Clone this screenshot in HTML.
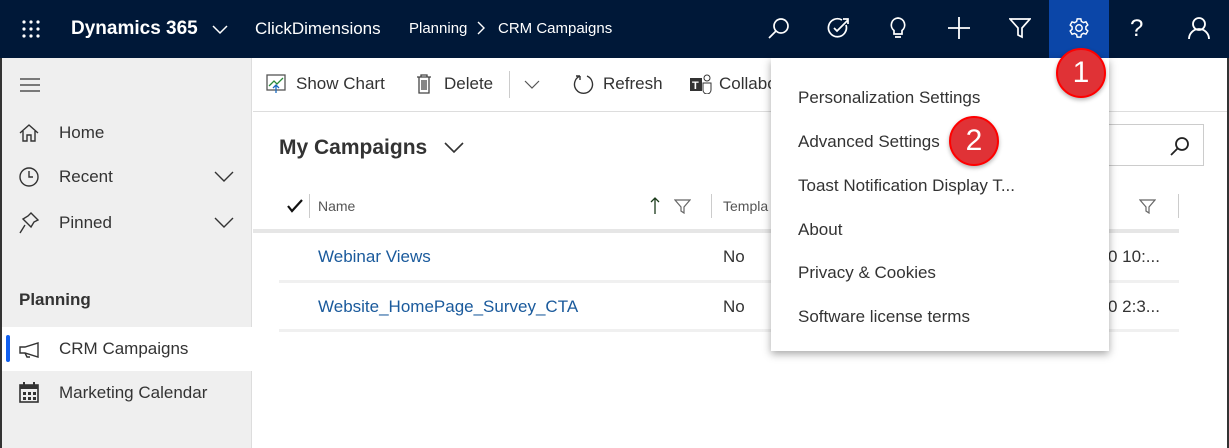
<!DOCTYPE html>
<html><head><meta charset="utf-8"><style>
*{box-sizing:border-box;margin:0;padding:0}
body{width:1229px;height:448px;overflow:hidden;font-family:"Liberation Sans",sans-serif;background:#fff;position:relative;color:#333}
.hdr{position:absolute;left:0;top:0;width:1229px;height:58px;background:#001838;color:#fff}
.hdr .t{position:absolute;top:0;line-height:58px;white-space:nowrap}
.side{position:absolute;left:0;top:58px;width:252px;height:390px;background:#efefef;border-left:2px solid #333;border-right:1px solid #ddd}
.side .it{position:absolute;left:0;width:251px;height:44px;font-size:17px;color:#333;line-height:44px}
.side .it span{position:absolute;left:57px}
.main .cmd{position:absolute;top:84px;font-size:17px;color:#333;transform:translateY(-50%)}
.menu{position:absolute;left:771px;top:58px;width:338px;height:293px;background:#fff;box-shadow:0 3px 8px rgba(0,0,0,.35)}
.menu div{position:absolute;left:27px;font-size:17px;color:#333;transform:translateY(-50%);white-space:nowrap}
.badge{position:absolute;width:50px;height:50px;border-radius:50%;background:#e03236;border:2px solid #f00;color:#fff;font-size:30px;text-align:center;line-height:46px;box-shadow:0 2px 4px rgba(0,0,0,.3)}
a{color:#1a5a9c;text-decoration:none}
</style></head><body>
<div class="hdr">
<svg style="position:absolute;left:21px;top:19px" width="20" height="20" fill="#fff"><circle cx="3" cy="3" r="1.6"/><circle cx="10" cy="3" r="1.6"/><circle cx="17" cy="3" r="1.6"/><circle cx="3" cy="10" r="1.6"/><circle cx="10" cy="10" r="1.6"/><circle cx="17" cy="10" r="1.6"/><circle cx="3" cy="17" r="1.6"/><circle cx="10" cy="17" r="1.6"/><circle cx="17" cy="17" r="1.6"/></svg>
<div class="t" style="left:71px;font-size:19px;font-weight:bold">Dynamics 365</div>
<svg style="position:absolute;left:212px;top:25px" width="16" height="10" fill="none" stroke="#fff" stroke-width="1.5"><path d="M1 1l7 7 7-7"/></svg>
<div class="t" style="left:255px;font-size:17px">ClickDimensions</div>
<div class="t" style="left:409px;font-size:15px">Planning</div>
<svg style="position:absolute;left:476px;top:21px" width="10" height="14" fill="none" stroke="#fff" stroke-width="1.4"><path d="M2 1l6 6-6 6"/></svg>
<div class="t" style="left:498px;font-size:15px">CRM Campaigns</div>
<svg style="position:absolute;left:768px;top:17px" width="22" height="22" fill="none" stroke="#fff" stroke-width="1.7"><circle cx="13" cy="9" r="7"/><path d="M8 14L1 21"/></svg>
<svg style="position:absolute;left:827px;top:16px" width="24" height="24" fill="none" stroke="#fff" stroke-width="1.7"><path d="M19 9a9 9 0 1 1-4-5"/><path d="M7 12l3 3 11-11M16 3h5v5"/></svg>
<svg style="position:absolute;left:888px;top:16px" width="20" height="24" fill="none" stroke="#fff" stroke-width="1.7"><path d="M10 2a7 7 0 0 0-4 12.5V18h8v-3.5A7 7 0 0 0 10 2zM7 21h6"/></svg>
<svg style="position:absolute;left:948px;top:17px" width="22" height="22" stroke="#fff" stroke-width="1.8"><path d="M11 0v22M0 11h22"/></svg>
<svg style="position:absolute;left:1009px;top:17px" width="22" height="22" fill="none" stroke="#fff" stroke-width="1.7"><path d="M1 2h20l-8 9v9l-4-2v-7z"/></svg>
<div style="position:absolute;left:1049px;top:0;width:60px;height:58px;background:#0b46a8"></div>
<svg style="position:absolute;left:1068px;top:17px" width="22" height="22" viewBox="0 0 24 24" fill="none" stroke="#fff" stroke-width="1.6"><circle cx="12" cy="12" r="3.5"/><path d="M10 2h4l.6 2.8 2.3 1.3 2.7-.9 2 3.5-2.1 1.9v2.7l2.1 1.9-2 3.5-2.7-.9-2.3 1.3L14 22h-4l-.6-2.8-2.3-1.3-2.7.9-2-3.5 2.1-1.9V10.7L2.4 8.8l2-3.5 2.7.9 2.3-1.3z"/></svg>
<div class="t" style="left:1130px;font-size:24px">?</div>
<svg style="position:absolute;left:1188px;top:16px" width="22" height="24" fill="none" stroke="#fff" stroke-width="1.8"><circle cx="11" cy="8" r="6"/><path d="M1 23a10 10 0 0 1 20 0"/></svg>
</div>

<div class="side">
<svg style="position:absolute;left:18px;top:20px" width="20" height="14" stroke="#333" stroke-width="1.3"><path d="M0 1h20M0 7h20M0 13h20"/></svg>
<div class="it" style="top:53px"><svg style="position:absolute;left:17px;top:13px" width="20" height="18" fill="none" stroke="#333" stroke-width="1.4"><path d="M1 9l9-8 9 8M4 7v10h4v-6h4v6h4V7"/></svg><span>Home</span></div>
<div class="it" style="top:97px"><svg style="position:absolute;left:17px;top:12px" width="20" height="20" fill="none" stroke="#333" stroke-width="1.4"><circle cx="10" cy="10" r="9"/><path d="M10 4v6h4"/></svg><span>Recent</span><svg style="position:absolute;left:212px;top:16px" width="20" height="12" fill="none" stroke="#333" stroke-width="1.4"><path d="M1 1l9 9 9-9"/></svg></div>
<div class="it" style="top:143px"><svg style="position:absolute;left:17px;top:11px" width="20" height="22" fill="none" stroke="#333" stroke-width="1.4"><path d="M12 1l7 7-4 2-3 5-8-8 5-3zM6 13l-5 8"/></svg><span>Pinned</span><svg style="position:absolute;left:212px;top:16px" width="20" height="12" fill="none" stroke="#333" stroke-width="1.4"><path d="M1 1l9 9 9-9"/></svg></div>
<div style="position:absolute;left:17px;top:232px;font-size:17px;font-weight:bold;color:#333">Planning</div>
<div class="it" style="top:269px;background:#fff"><div style="position:absolute;left:4px;top:8px;width:4px;height:27px;background:#1160f0;border-radius:2px"></div><svg style="position:absolute;left:17px;top:15px" width="22" height="16" fill="none" stroke="#333" stroke-width="1.4"><path d="M1 5h5l13-4v14L6 11H1zM6 11l2 4h3"/></svg><span>CRM Campaigns</span></div>
<div class="it" style="top:313px"><svg style="position:absolute;left:17px;top:11px" width="20" height="21" fill="#333"><rect x="1" y="3" width="18" height="17" fill="none" stroke="#333" stroke-width="1.6"/><rect x="1" y="3" width="18" height="4"/><rect x="4" y="0" width="2" height="5"/><rect x="14" y="0" width="2" height="5"/><rect x="4" y="10" width="3" height="3"/><rect x="9" y="10" width="3" height="3"/><rect x="14" y="10" width="3" height="3"/><rect x="4" y="15" width="3" height="3"/><rect x="9" y="15" width="3" height="3"/><rect x="14" y="15" width="3" height="3"/></svg><span>Marketing Calendar</span></div>
</div>

<div class="main">
<div style="position:absolute;left:253px;top:111px;width:976px;height:1px;background:#ddd"></div>
<svg style="position:absolute;left:266px;top:74px" width="20" height="20" fill="none" stroke-width="1.3"><rect x="1" y="1" width="18" height="15" stroke="#555"/><path d="M3 12l5-5 3 3 6-6" stroke="#2a8a3a"/><path d="M10 19v-8M7 14l3-3 3 3" stroke="#1a6bc0"/></svg>
<div class="cmd" style="left:296px">Show Chart</div>
<svg style="position:absolute;left:416px;top:74px" width="16" height="20" fill="none" stroke="#444" stroke-width="1.3"><path d="M1 3h14M5 3V1h6v2M3 3v16h10V3M6 6v10M8 6v10M10 6v10"/></svg>
<div class="cmd" style="left:444px">Delete</div>
<div style="position:absolute;left:509px;top:71px;width:1px;height:27px;background:#ccc"></div>
<svg style="position:absolute;left:524px;top:80px" width="16" height="9" fill="none" stroke="#555" stroke-width="1.2"><path d="M1 1l7 7 7-7"/></svg>
<svg style="position:absolute;left:573px;top:74px" width="21" height="21" fill="none" stroke="#333" stroke-width="1.4"><path d="M7 2A9 9 0 1 0 14 2M7 2v4M7 2H3"/></svg>
<div class="cmd" style="left:603px">Refresh</div>
<svg style="position:absolute;left:690px;top:74px" width="22" height="20"><rect x="0" y="4" width="12" height="13" fill="#333"/><text x="2" y="15" font-size="11" fill="#fff" font-family="Liberation Sans" font-weight="bold">T</text><circle cx="17" cy="4" r="3" fill="none" stroke="#333"/><path d="M13 9h8v7a4 4 0 0 1-8 0z" fill="none" stroke="#333"/></svg>
<div class="cmd" style="left:719px">Collabo</div>

<div style="position:absolute;left:279px;top:148px;transform:translateY(-50%);font-size:21px;font-weight:bold;color:#333">My Campaigns</div>
<svg style="position:absolute;left:444px;top:142px" width="20" height="12" fill="none" stroke="#333" stroke-width="1.6"><path d="M1 1l9 9 9-9"/></svg>
<div style="position:absolute;left:1100px;top:124px;width:104px;height:42px;border:1px solid #ccc;border-left:none"></div>
<svg style="position:absolute;left:1170px;top:136px" width="20" height="20" fill="none" stroke="#222" stroke-width="1.8"><circle cx="12" cy="8" r="6"/><path d="M8 12L1 19"/></svg>

<svg style="position:absolute;left:287px;top:199px" width="16" height="14" fill="none" stroke="#111" stroke-width="2.2"><path d="M1 7l4 5L15 1"/></svg>
<div style="position:absolute;left:309px;top:194px;width:1px;height:24px;background:#ccc"></div>
<div style="position:absolute;left:318px;top:206px;transform:translateY(-50%);font-size:14px;color:#555">Name</div>
<svg style="position:absolute;left:650px;top:197px" width="10" height="18" fill="none" stroke="#1a3a1a" stroke-width="1.3"><path d="M5 1v16M1 5l4-4 4 4"/></svg>
<svg style="position:absolute;left:674px;top:199px" width="17" height="15" fill="none" stroke="#666" stroke-width="1.2"><path d="M1 1h15l-6 7v6l-3-2V8z"/></svg>
<div style="position:absolute;left:711px;top:194px;width:1px;height:24px;background:#ccc"></div>
<div style="position:absolute;left:723px;top:206px;transform:translateY(-50%);font-size:14px;color:#555">Templa</div>
<svg style="position:absolute;left:1139px;top:199px" width="17" height="15" fill="none" stroke="#666" stroke-width="1.2"><path d="M1 1h15l-6 7v6l-3-2V8z"/></svg>
<div style="position:absolute;left:1178px;top:194px;width:1px;height:24px;background:#ccc"></div>
<div style="position:absolute;left:253px;top:229px;width:926px;height:4px;background:#e6e6e6"></div>
<div style="position:absolute;left:318px;top:257px;transform:translateY(-50%);font-size:17px"><a>Webinar Views</a></div>
<div style="position:absolute;left:723px;top:257px;transform:translateY(-50%);font-size:17px">No</div>
<div style="position:absolute;left:1108px;top:257px;transform:translateY(-50%);font-size:17px">0 10:...</div>
<div style="position:absolute;left:279px;top:280px;width:900px;height:3px;background:#f0f0f0"></div>
<div style="position:absolute;left:318px;top:307px;transform:translateY(-50%);font-size:17px"><a>Website_HomePage_Survey_CTA</a></div>
<div style="position:absolute;left:723px;top:307px;transform:translateY(-50%);font-size:17px">No</div>
<div style="position:absolute;left:1108px;top:307px;transform:translateY(-50%);font-size:17px">0 2:3...</div>
<div style="position:absolute;left:279px;top:329px;width:900px;height:3px;background:#f0f0f0"></div>
</div>
<div style="position:absolute;left:1227px;top:58px;width:2px;height:390px;background:#333"></div>

<div class="menu">
<div style="top:40px">Personalization Settings</div>
<div style="top:84px">Advanced Settings</div>
<div style="top:128px">Toast Notification Display T...</div>
<div style="top:172px">About</div>
<div style="top:215px">Privacy &amp; Cookies</div>
<div style="top:259px">Software license terms</div>
</div>
<div class="badge" style="left:1056px;top:48px">1</div>
<div class="badge" style="left:949px;top:116px">2</div>
</body></html>
